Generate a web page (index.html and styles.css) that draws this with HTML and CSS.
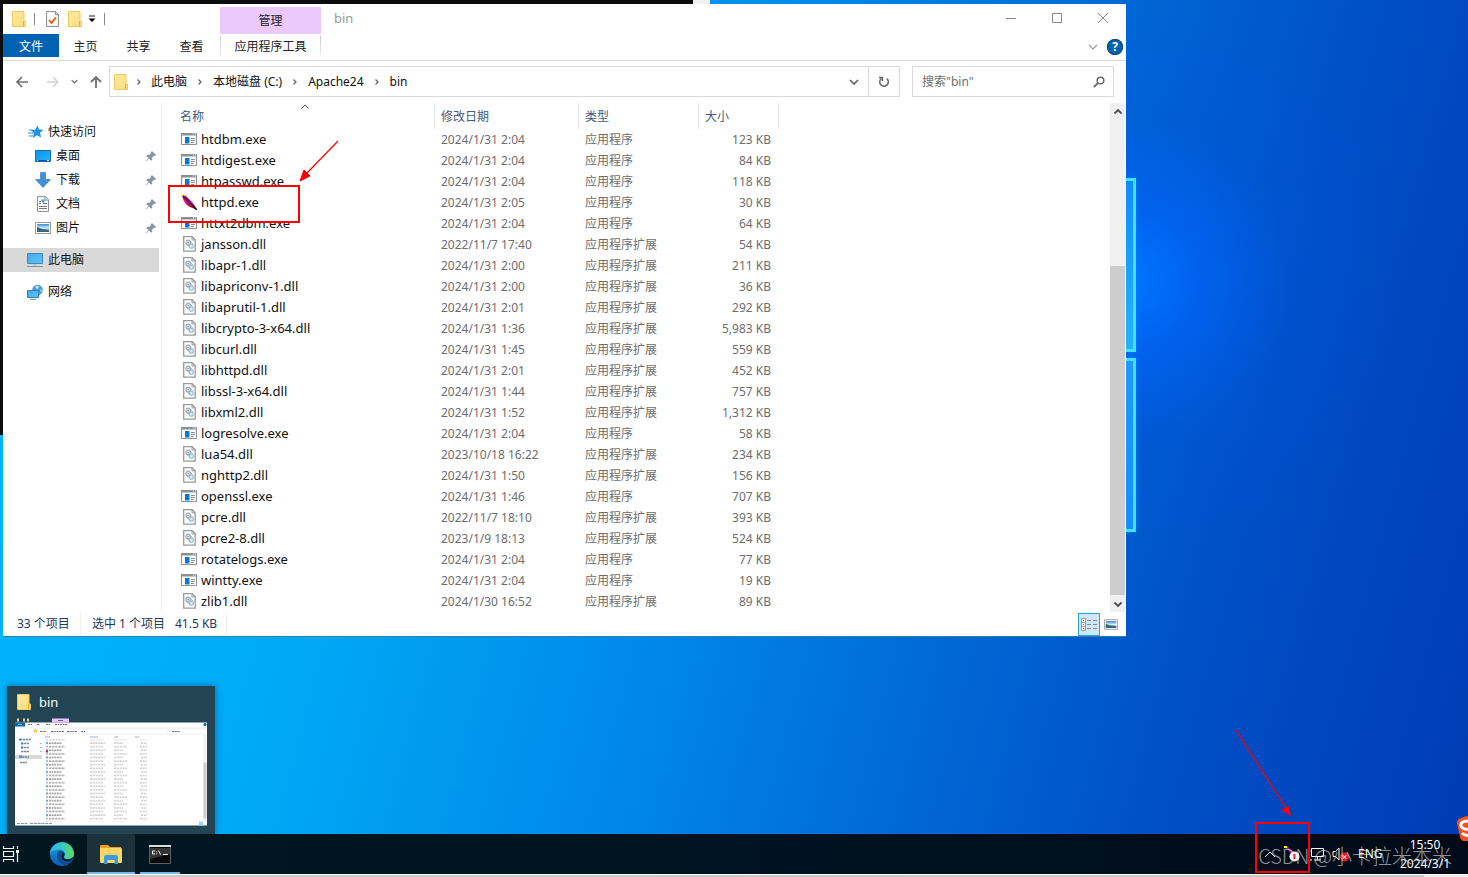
FILE: index.html
```html
<!DOCTYPE html>
<html lang="zh-CN">
<head>
<meta charset="utf-8">
<title>bin</title>
<link rel="stylesheet" href="styles.css">
</head>
<body>
<svg class="defs" aria-hidden="true">
  <defs>
    <linearGradient id="gFolder" x1="0" y1="0" x2="1" y2="1"><stop offset="0" stop-color="#ffe9a2"/><stop offset="1" stop-color="#ffdc7c"/></linearGradient>
    <linearGradient id="gBlue" x1="0" y1="0" x2="1" y2="1"><stop offset="0" stop-color="#0a93ee"/><stop offset="1" stop-color="#2ab4fb"/></linearGradient>
    <linearGradient id="gScreen" x1="0" y1="0" x2="1" y2="1"><stop offset="0" stop-color="#4aa9e8"/><stop offset="1" stop-color="#5cc4fb"/></linearGradient>
    <linearGradient id="gSky" x1="0" y1="0" x2="0" y2="1"><stop offset="0" stop-color="#3f86d6"/><stop offset=".5" stop-color="#d5ecf7"/><stop offset="1" stop-color="#2d6a86"/></linearGradient>
    <linearGradient id="gEdge" x1="0" y1="0" x2="1" y2="0"><stop offset="0" stop-color="#2fb5e8"/><stop offset=".5" stop-color="#35c9c2"/><stop offset="1" stop-color="#62db5a"/></linearGradient>
    <linearGradient id="gEdge2" x1="0" y1="0" x2="0" y2="1"><stop offset="0" stop-color="#1ba2e2"/><stop offset="1" stop-color="#0b5cb4"/></linearGradient>
    <pattern id="mini" width="192" height="7.2" patternUnits="userSpaceOnUse" patternTransform="translate(0 3)">
      <rect x="31" y="0" width="2" height="2" fill="#63a6dc"/>
      <path d="M34 1h13" stroke="#777" stroke-width="1.3" stroke-dasharray="2 .6"/>
      <path d="M75 1h15M99 1h9M126 1h6" stroke="#bbb" stroke-width="1.3" stroke-dasharray="2 .7"/>
      <rect x="31" y="3.6" width="2" height="2" fill="#b9bec4"/>
      <path d="M34 4.6h16" stroke="#888" stroke-width="1.3" stroke-dasharray="2.4 .7"/>
      <path d="M75 4.6h14M99 4.6h13M125 4.6h7" stroke="#bbb" stroke-width="1.3" stroke-dasharray="2 .8"/>
    </pattern>
  </defs>
  <symbol id="folder" viewBox="0 0 14 16"><path d="M.5.5h11.500v9.500h1.500v5.500H.5z" fill="url(#gFolder)" stroke="#edcb5e"/><path d="M11.500 10v5.500" stroke="#dfb63c"/></symbol>
  <symbol id="exe" viewBox="0 0 16 12"><path d="M.5.5h15v11H.5z" fill="#fff" stroke="#8b9094"/><path d="M0 0h16v2.500H0z" fill="#8b9094"/><path d="M12 1h1m1 0h1" stroke="#fff"/><path d="M4 4h4.500v6.500H4z" fill="#0a78d4"/><path d="M10 5.500h4M10 7.500h4M10 9.500h3" stroke="#8b9094"/></symbol>
  <symbol id="dll" viewBox="0 0 13 16"><path d="M.7.7h8.500l3 3v11.500H.7z" fill="#fff" stroke="#969a9e" stroke-width="1.300"/><path d="M9 .7v3.200h3.300" fill="none" stroke="#969a9e"/><circle cx="5.200" cy="6.500" r="2.300" fill="#e3e7eb" stroke="#a3abb4" stroke-width="1.200"/><circle cx="5.200" cy="6.500" r=".8" fill="#8f98a2"/><path d="M3 8l4.500 3.500M7 5l3 3.500" stroke="#a3abb4"/><circle cx="8.300" cy="10.300" r="2" fill="#d9eefa" stroke="#93bdd6" stroke-width="1.100"/></symbol>
  <symbol id="feather" viewBox="0 0 16 16"><path d="M1 1l4 1 3 3 3 3 3 4 1 3-4-1-4-2-3-3-2-4z" fill="#f0105c"/><path d="M2 2l3 3 4 4 5 5" stroke="#3a1b8f" stroke-width="2" fill="none"/><path d="M3 2l3 2 3 3M6 9l3 3 3 1" stroke="#d40000" fill="none"/><path d="M12 12l4 4" stroke="#000" stroke-width="1.500"/><path d="M0 0h2v2H0z" fill="#ff0"/></symbol>
  <symbol id="pin" viewBox="0 0 12 12"><path d="M7 1l4 4-1 1-1-.2-2 2 .2 2-1 1L4 8.500.7 11.500l-.4-.3L3.500 8 1.200 5.800l1-1 2 .2 2-2L6 2z" fill="#8796a3"/></symbol>
  <symbol id="sep" viewBox="0 0 8 8"><path d="M2.500 1.500L5 4 2.500 6.500" fill="none" stroke="#666" stroke-width="1.300"/></symbol>
  <symbol id="down" viewBox="0 0 10 10"><path d="M1 3l4 4 4-4" fill="none" stroke="currentColor" stroke-width="1.700"/></symbol>
  <symbol id="photo" viewBox="0 0 16 12"><path d="M.5.5h15v11H.5z" fill="#fff" stroke="#999"/><path d="M2 2h12v8H2z" fill="url(#gSky)"/><path d="M2 5l5 2 7 1v2H2z" fill="#30687a"/></symbol>
</svg>

<main class="desktop">
  <div class="pane pane-top"></div>
  <div class="pane pane-bottom"></div>
  <div class="console" aria-hidden="true"></div>
  <div class="console-side" aria-hidden="true"></div>

  <section class="window">
    <header class="titlebar">
      <div class="quick">
        <svg class="i-folder" aria-hidden="true"><use href="#folder"/></svg>
        <span class="bar"></span>
        <button class="plain" aria-label="属性"><svg class="i-check" viewBox="0 0 13 16"><path d="M.6.6h8.800l3 3v11.800H.6z" fill="#fff" stroke="#888"/><path d="M9.400.6v3h3" fill="none" stroke="#888"/><path d="M3 9l2.500 3L10 6.500" fill="none" stroke="#e8590c" stroke-width="1.800"/></svg></button>
        <button class="plain" aria-label="新建文件夹"><svg class="i-folder"><use href="#folder"/></svg></button>
        <button class="plain customize" aria-label="自定义快速访问工具栏"><svg class="i-caret" viewBox="0 0 8 8"><path d="M1 1h6" stroke="#222"/><path d="M.5 3.500h7L4 7z" fill="#000"/></svg></button>
        <span class="bar"></span>
      </div>
      <div class="context-title">管理</div>
      <h1 class="title">bin</h1>
      <div class="controls">
        <button aria-label="最小化"><svg viewBox="0 0 12 12"><path d="M1 6.500h10" stroke="#888"/></svg></button>
        <button aria-label="最大化"><svg viewBox="0 0 12 12"><path d="M1.500 1.500h9v9h-9z" fill="none" stroke="#888"/></svg></button>
        <button aria-label="关闭"><svg viewBox="0 0 12 12"><path d="M1 1l10 10M11 1L1 11" stroke="#888"/></svg></button>
      </div>
    </header>

    <nav class="ribbon">
      <button class="tab file">文件</button>
      <button class="tab">主页</button>
      <button class="tab">共享</button>
      <button class="tab">查看</button>
      <button class="tab tools">应用程序工具</button>
      <span class="ribbon-end">
        <button class="plain" aria-label="展开功能区"><svg class="i10" viewBox="0 0 10 10"><path d="M1 3l4 4 4-4" fill="none" stroke="#999" stroke-width="1.200"/></svg></button>
        <button class="help" aria-label="帮助">?</button>
      </span>
    </nav>

    <div class="address-row">
      <div class="history">
        <button class="plain" aria-label="后退"><svg viewBox="0 0 14 14"><path d="M13 7H2M7 2L2 7l5 5" fill="none" stroke="#6f6f6f" stroke-width="1.700"/></svg></button>
        <button class="plain" aria-label="前进"><svg viewBox="0 0 14 14"><path d="M1 7h11M7 2l5 5-5 5" fill="none" stroke="#d4d4d4" stroke-width="1.500"/></svg></button>
        <button class="plain recent" aria-label="最近"><svg class="i-small"><use href="#down"/></svg></button>
        <button class="plain" aria-label="上移"><svg viewBox="0 0 14 14"><path d="M7 13V2M2 7l5-5 5 5" fill="none" stroke="#6f6f6f" stroke-width="1.800"/></svg></button>
      </div>
      <div class="crumbs">
        <svg class="i-folder" aria-hidden="true"><use href="#folder"/></svg>
        <svg class="i-sep first" aria-hidden="true"><use href="#sep"/></svg>
        <a href="#">此电脑</a><svg class="i-sep" aria-hidden="true"><use href="#sep"/></svg>
        <a href="#">本地磁盘 (C:)</a><svg class="i-sep" aria-hidden="true"><use href="#sep"/></svg>
        <a href="#">Apache24</a><svg class="i-sep" aria-hidden="true"><use href="#sep"/></svg>
        <a href="#">bin</a>
        <button class="plain drop" aria-label="以前的位置"><svg class="i10"><use href="#down"/></svg></button>
        <button class="refresh" aria-label="刷新"><svg viewBox="0 0 12 12"><path d="M8.800 2.600A4.300 4.300 0 1 1 3.400 2.500M1 1.500h3.500V5" fill="none" stroke="#6a6a6a" stroke-width="1.500"/></svg></button>
      </div>
      <label class="search">
        <input type="text" placeholder="搜索&quot;bin&quot;" aria-label="搜索">
        <svg viewBox="0 0 12 12"><circle cx="7.500" cy="4.500" r="3.300" fill="none" stroke="#6a6a6a" stroke-width="1.500"/><path d="M5 7L.8 11" stroke="#6a6a6a" stroke-width="1.800"/></svg>
      </label>
    </div>

    <div class="content">
      <aside class="sidebar">
        <a href="#" class="side"><svg class="i16" viewBox="0 0 16 16"><path d="M9.500 1.500l1.500 4 4.500.3-3.500 3 1.200 4.700-4.200-2.300-4 2.800.8-4.700L3 6l4.300-.3z" fill="#2590e8"/><path d="M1 6h4M0 9h5M1 12h4" stroke="#2590e8"/></svg>快速访问</a>
        <a href="#" class="side sub"><svg class="i16" viewBox="0 0 16 16"><path d="M.5 2.500h15v11H.5z" fill="url(#gBlue)" stroke="#0871ba"/><path d="M1 12.500h14" stroke="#075899"/><path d="M2 12.500h1M12 12.500h2" stroke="#fff"/></svg>桌面<svg class="i-pin"><use href="#pin"/></svg></a>
        <a href="#" class="side sub"><svg class="i16" viewBox="0 0 16 16"><path d="M5.500.5h5v7h5L8 15.500.5 7.500h5z" fill="#3e8edb" stroke="#2b76bf" stroke-width=".6"/></svg>下载<svg class="i-pin"><use href="#pin"/></svg></a>
        <a href="#" class="side sub"><svg class="i16" viewBox="0 0 16 16"><path d="M2.500.6h8l3 3v11.800h-11z" fill="#fff" stroke="#8b8f93"/><path d="M10 .6v3.500h3.500" fill="none" stroke="#8b8f93"/><path d="M4 5.500h2M4 7.500h2M4 10.500h8M4 12.500h8M8 7.500h4" stroke="#777"/><path d="M6.500 3.500h3v3h-3z" fill="#3c9bd8"/></svg>文档<svg class="i-pin"><use href="#pin"/></svg></a>
        <a href="#" class="side sub"><svg class="i-photo"><use href="#photo"/></svg>图片<svg class="i-pin"><use href="#pin"/></svg></a>
        <a href="#" class="side root selected"><svg class="i16" viewBox="0 0 16 16"><path d="M.5 1.500h15v10H.5z" fill="url(#gScreen)" stroke="#3b87b8"/><path d="M0 14.500h16" stroke="#7b99ab"/><path d="M6 12h4v2H6z" fill="#b9cedb"/></svg>此电脑</a>
        <a href="#" class="side root"><svg class="i16" viewBox="0 0 16 16"><circle cx="10.500" cy="6" r="5.300" fill="#4c9bcd"/><path d="M8 2.500l3-1 1 2-2 2zM13 5l2 1-1 3z" fill="#bfe1ec"/><path d="M.5 6.500h11v7H.5z" fill="url(#gScreen)" stroke="#2d7fb5"/><path d="M3 15.500h6" stroke="#7b99ab"/></svg>网络</a>
      </aside>

      <div class="files">
        <svg class="sort" viewBox="0 0 8 5" aria-hidden="true"><path d="M.5 4.500L4 1l3.500 3.500" fill="none" stroke="#555"/></svg>
        <table>
          <colgroup><col class="c-name"><col class="c-date"><col class="c-type"><col class="c-size"></colgroup>
          <thead><tr><th>名称</th><th>修改日期</th><th>类型</th><th>大小</th></tr></thead>
          <tbody>
            <tr><td><span class="fn"><svg class="exe"><use href="#exe"/></svg>htdbm.exe</span></td><td>2024/1/31 2:04</td><td>应用程序</td><td>123 KB</td></tr>
            <tr><td><span class="fn"><svg class="exe"><use href="#exe"/></svg>htdigest.exe</span></td><td>2024/1/31 2:04</td><td>应用程序</td><td>84 KB</td></tr>
            <tr><td><span class="fn"><svg class="exe"><use href="#exe"/></svg>htpasswd.exe</span></td><td>2024/1/31 2:04</td><td>应用程序</td><td>118 KB</td></tr>
            <tr><td><span class="fn"><svg class="feather"><use href="#feather"/></svg>httpd.exe</span></td><td>2024/1/31 2:05</td><td>应用程序</td><td>30 KB</td></tr>
            <tr><td><span class="fn"><svg class="exe"><use href="#exe"/></svg>httxt2dbm.exe</span></td><td>2024/1/31 2:04</td><td>应用程序</td><td>64 KB</td></tr>
            <tr><td><span class="fn"><svg class="dll"><use href="#dll"/></svg>jansson.dll</span></td><td>2022/11/7 17:40</td><td>应用程序扩展</td><td>54 KB</td></tr>
            <tr><td><span class="fn"><svg class="dll"><use href="#dll"/></svg>libapr-1.dll</span></td><td>2024/1/31 2:00</td><td>应用程序扩展</td><td>211 KB</td></tr>
            <tr><td><span class="fn"><svg class="dll"><use href="#dll"/></svg>libapriconv-1.dll</span></td><td>2024/1/31 2:00</td><td>应用程序扩展</td><td>36 KB</td></tr>
            <tr><td><span class="fn"><svg class="dll"><use href="#dll"/></svg>libaprutil-1.dll</span></td><td>2024/1/31 2:01</td><td>应用程序扩展</td><td>292 KB</td></tr>
            <tr><td><span class="fn"><svg class="dll"><use href="#dll"/></svg>libcrypto-3-x64.dll</span></td><td>2024/1/31 1:36</td><td>应用程序扩展</td><td>5,983 KB</td></tr>
            <tr><td><span class="fn"><svg class="dll"><use href="#dll"/></svg>libcurl.dll</span></td><td>2024/1/31 1:45</td><td>应用程序扩展</td><td>559 KB</td></tr>
            <tr><td><span class="fn"><svg class="dll"><use href="#dll"/></svg>libhttpd.dll</span></td><td>2024/1/31 2:01</td><td>应用程序扩展</td><td>452 KB</td></tr>
            <tr><td><span class="fn"><svg class="dll"><use href="#dll"/></svg>libssl-3-x64.dll</span></td><td>2024/1/31 1:44</td><td>应用程序扩展</td><td>757 KB</td></tr>
            <tr><td><span class="fn"><svg class="dll"><use href="#dll"/></svg>libxml2.dll</span></td><td>2024/1/31 1:52</td><td>应用程序扩展</td><td>1,312 KB</td></tr>
            <tr><td><span class="fn"><svg class="exe"><use href="#exe"/></svg>logresolve.exe</span></td><td>2024/1/31 2:04</td><td>应用程序</td><td>58 KB</td></tr>
            <tr><td><span class="fn"><svg class="dll"><use href="#dll"/></svg>lua54.dll</span></td><td>2023/10/18 16:22</td><td>应用程序扩展</td><td>234 KB</td></tr>
            <tr><td><span class="fn"><svg class="dll"><use href="#dll"/></svg>nghttp2.dll</span></td><td>2024/1/31 1:50</td><td>应用程序扩展</td><td>156 KB</td></tr>
            <tr><td><span class="fn"><svg class="exe"><use href="#exe"/></svg>openssl.exe</span></td><td>2024/1/31 1:46</td><td>应用程序</td><td>707 KB</td></tr>
            <tr><td><span class="fn"><svg class="dll"><use href="#dll"/></svg>pcre.dll</span></td><td>2022/11/7 18:10</td><td>应用程序扩展</td><td>393 KB</td></tr>
            <tr><td><span class="fn"><svg class="dll"><use href="#dll"/></svg>pcre2-8.dll</span></td><td>2023/1/9 18:13</td><td>应用程序扩展</td><td>524 KB</td></tr>
            <tr><td><span class="fn"><svg class="exe"><use href="#exe"/></svg>rotatelogs.exe</span></td><td>2024/1/31 2:04</td><td>应用程序</td><td>77 KB</td></tr>
            <tr><td><span class="fn"><svg class="exe"><use href="#exe"/></svg>wintty.exe</span></td><td>2024/1/31 2:04</td><td>应用程序</td><td>19 KB</td></tr>
            <tr><td><span class="fn"><svg class="dll"><use href="#dll"/></svg>zlib1.dll</span></td><td>2024/1/30 16:52</td><td>应用程序扩展</td><td>89 KB</td></tr>
          </tbody>
        </table>
      </div>

      <div class="scrollbar" aria-hidden="true">
        <span class="arrow"><svg viewBox="0 0 10 10"><path d="M1.500 6.500L5 3l3.500 3.500" fill="none" stroke="#505050" stroke-width="1.900"/></svg></span>
        <span class="track"></span>
        <span class="thumb"></span>
        <span class="arrow"><svg viewBox="0 0 10 10"><path d="M1.500 3.500L5 7l3.500-3.500" fill="none" stroke="#505050" stroke-width="1.900"/></svg></span>
      </div>
    </div>

    <footer class="status">
      <span class="count">33 个项目</span>
      <span class="chosen">选中 1 个项目</span>
      <span class="bytes">41.5 KB</span>
      <span class="views">
        <button class="view on" aria-label="详细信息"><svg viewBox="0 0 16 14"><path d="M.5.500h4v4h-4zM.5 4.500h4v4h-4zM.5 8.500h4v4h-4z" fill="#fff" stroke="#999"/><path d="M6 2.500h4M6 6.500h4M6 10.500h4M12 2.500h4M12 6.500h4M12 10.500h4" stroke="#888"/><path d="M2 2h1v1H2z" fill="#555"/><path d="M2 6h1v1H2z" fill="#27f"/><path d="M2 10h1v1H2z" fill="#d22"/></svg></button>
        <button class="view" aria-label="大图标"><svg class="i-thumb"><use href="#photo"/></svg></button>
      </span>
    </footer>
  </section>

  <section class="preview">
    <div class="preview-title"><svg class="i-folder" aria-hidden="true"><use href="#folder"/></svg>bin</div>
    <svg class="preview-shot" viewBox="0 0 192 108" aria-hidden="true">
      <path d="M0 5h192v103H0z" fill="#fff"/>
      <path d="M2 1h2v3H2zM8 1h2v3H8zM12 1h2v3h-2z" fill="#e8d28a"/>
      <path d="M37 1h17v4H37z" fill="#e9c6fb"/>
      <path d="M43 3h5" stroke="#76587f"/>
      <path d="M0 5h10v4H0z" fill="#0063b1"/>
      <path d="M3 7h4" stroke="#8fc2ea"/>
      <path d="M13 7h4M22 7h3M31 7h4M40 7h12" stroke="#777" stroke-dasharray="2 .5"/>
      <path d="M0 10.500h192M18 11.500h135v5H18zM155 11.500h35v5h-35z" fill="none" stroke="#e2e2e2" stroke-width=".5"/>
      <path d="M19 12h3v3h-3z" fill="#f5c95a"/>
      <path d="M25 14h6M36 14h13M52 14h10M66 14h4M157 14h8" stroke="#777" stroke-dasharray="2.200 .5"/>
      <circle cx="190" cy="7" r="1.600" fill="#0063b1"/>
      <path d="M30 19.500h5M75 19.500h8M99 19.500h4M120 19.500h4" stroke="#9fb0c6"/>
      <path d="M0 37.500h27v4H0z" fill="#d9d9d9"/>
      <path d="M5 22h11M6 26h8M6 30h8M6 34h8M4 39.500h10M5 45h7" stroke="#7d8992" stroke-dasharray="2.500 .5" stroke-width="1.300"/>
      <path d="M4 21h2v2H4zM6 25h2v2H6zM6 29h2v2H6zM4 38h3v2H4z" fill="#2590e8"/>
      <path d="M25 26h1.500M25 30h1.500M25 34h1.500" stroke="#99a5af"/>
      <path d="M0 22h160v82H0z" fill="url(#mini)"/>
      <path d="M31 33h2v2h-2z" fill="#e0104c"/>
      <path d="M190 17v87" stroke="#f0f0f0" stroke-width="3"/>
      <path d="M190 45v56" stroke="#cdcdcd" stroke-width="3"/>
      <path d="M2 106h10M15 106h22" stroke="#8492a5" stroke-dasharray="3 .8"/>
      <path d="M184 104h4v4h-4z" fill="#9fd7f3"/>
    </svg>
  </section>

  <svg class="note-arrow one" viewBox="0 0 40 42" aria-hidden="true"><path d="M39 1L8 33" stroke="#f00" stroke-width="1.200"/><path d="M1 41l4-11 6 6z" fill="#f00" stroke="#f00"/></svg>
  <div class="note-box one"></div>
  <svg class="note-arrow two" viewBox="0 0 58 88" aria-hidden="true"><path d="M2 1l50 78" stroke="#f00" stroke-width="1.200"/><path d="M57 87l-10-6 8-4z" fill="#f00"/></svg>
</main>

<footer class="taskbar">
  <button class="task-view" aria-label="任务视图"><svg viewBox="0 0 16 16"><path d="M.5 5.500h10v5H.5zM.5 0v2.500h10V0M.5 16v-2.500h10V16M14.500 0v3M14.500 7v9" fill="none" stroke="#fff" stroke-width="1.200"/><path d="M13 4h3v3h-3z" fill="#fff"/></svg></button>
  <button class="task" aria-label="Microsoft Edge"><svg class="i24" viewBox="0 0 24 24"><circle cx="12" cy="12" r="12" fill="url(#gEdge2)"/><path d="M0 11C1-1 21-5 24 11c.5 5-4 6.500-7.500 6-2.500-.4-3-1.500-2-3 2-4-2-7-6-6.500C4 8 1 9 0 11z" fill="url(#gEdge)"/><path d="M9 9c-5 5-1 13 6 14 3 0 6-2 7.500-4.500-4 2-9.500 1-11-2.500-1-2.500 0-5 1.500-6-1-1.300-2.500-1.500-4-1z" fill="#0c4a9c"/><path d="M13 10c2 1 2 3 .8 4.500-.8 2 1.200 3 4.200 2.700 2.500-.2 4.500-1.200 5.500-3-.8 3-2.500 4.500-4.500 5.100-4 .7-7.500-1.300-7.500-5 0-2 .7-3.500 1.500-4.300z" fill="#001a24"/></svg></button>
  <button class="task active" aria-label="文件资源管理器"><svg class="i-explorer" viewBox="0 0 22 19"><path d="M0 1q0-1 1-1h7l2 2h11v3H0z" fill="#e8a317"/><path d="M0 3h21q1 0 1 1v13q0 1-1 1H1q-1 0-1-1z" fill="#fdd663"/><path d="M4 19v-7q0-2 2-2h10q2 0 2 2v7h-3.500v-4h-7v4z" fill="#3b9ae0"/></svg></button>
  <button class="task open" aria-label="命令提示符"><svg class="i-cmd" viewBox="0 0 22 19"><path d="M.5.500h21v18H.5z" fill="#0a0a0a" stroke="#5a6165"/><path d="M0 0h22v2H0z" fill="#d9dde0"/><path d="M1 3h20v6L1 14z" fill="#343434"/><path d="M6 6H3.500v3H6M7.500 6.500v.800M7.500 8.500v.800M9.500 5.500l2 4M14 9.500h5" fill="none" stroke="#fff"/></svg></button>
  <div class="tray">
    <svg class="i-chevron" viewBox="0 0 12 8" aria-hidden="true"><path d="M1 7l5-5 5 5" fill="none" stroke="#fff"/></svg>
    <svg class="i16" viewBox="0 0 16 16" aria-hidden="true"><path d="M2 1l11 10" stroke="#c2188f" stroke-width="2.500"/><path d="M2 2l9 9" stroke="#402ba8"/><path d="M0 0h3v2H0z" fill="#ff0"/><circle cx="10.500" cy="10.500" r="5" fill="#fff"/><path d="M9 8h2.500v5H9z" fill="#e21b3c"/></svg>
    <svg class="i-net" viewBox="0 0 16 14" aria-hidden="true"><path d="M3.500 1.500h12v8h-12zM9.500 10v3M6 13h7M.5 1v3h2M1.500 4v9H4" fill="none" stroke="#fff"/></svg>
    <svg class="i-vol" viewBox="0 0 18 16" aria-hidden="true"><path d="M1 5.500h2.500L7 2v12l-3.500-3.500H1z" fill="none" stroke="#fff"/><circle cx="12.500" cy="11" r="4.500" fill="#d6202c"/><path d="M10.700 9.200l3.600 3.600M14.300 9.200l-3.600 3.600" stroke="#fff"/></svg>
    <span class="lang">ENG</span>
    <time class="clock"><span>15:50</span><span>2024/3/1</span></time>
  </div>
  <div class="note-box two"></div>
  <svg class="ime" viewBox="0 0 11 26" aria-hidden="true"><path d="M4 2Q8 0 11 0v25H7q-3 0-4-4L0 7q0-4 4-5z" fill="#f4511e"/><path d="M11 5Q3 5 4 10q1 3 7 3.500M5 17q3 3 6 2.500" fill="none" stroke="#fff" stroke-width="3"/></svg>
  <div class="watermark">CSDN @小卡拉米本米</div>
</footer>
<div class="page-scroll" aria-hidden="true"></div>
</body>
</html>
```
FILE: styles.css
```css
* { box-sizing: border-box; }
body {
  margin: 0;
  min-height: 100vh;
  display: flex;
  flex-direction: column;
  overflow: hidden;
  background: #fff;
  font: 12px/16px "Noto Sans", "Noto Sans CJK SC", sans-serif;
  color: #222;
}
button { border: 0; padding: 0; background: none; font: inherit; color: inherit; }
a { color: inherit; text-decoration: none; }
svg { display: block; flex: none; }
.defs { position: absolute; width: 0; height: 0; }
.plain { display: flex; align-items: center; justify-content: center; color: #666; }
.i-folder { width: 14px; height: 16px; }
.i16 { width: 16px; height: 16px; }
.i24 { width: 24px; height: 24px; }
.i10 { width: 10px; height: 10px; }

/* desktop */
.desktop {
  position: relative;
  flex: 1;
  overflow: hidden;
  background:
    radial-gradient(circle at 1130px 280px, rgba(0, 116, 255, 1) 0, rgba(0, 100, 250, .7) 70px, rgba(0, 85, 225, .25) 160px, rgba(0, 80, 215, 0) 270px),
    linear-gradient(105deg, #00b8ff 0%, #00a9f6 28%, #0089ea 48%, #0069d6 66%, #004ec6 82%, #003cb4 100%);
}
.pane {
  position: absolute;
  left: 1000px;
  width: 136px;
  height: 174px;
  border: 3px solid #3fe3ff;
  background: linear-gradient(#0f8cff, #22b4ff);
  box-shadow: 0 0 4px #0a84ff;
}
.pane-top { top: 178px; }
.pane-bottom { top: 358px; background: linear-gradient(#2098ff, #1390ff); }
.console { position: absolute; left: 0; top: 0; width: 710px; height: 4px; background: linear-gradient(90deg, #0c0c0c 693px, #f0f0f0 693px); }
.console-side { position: absolute; left: 0; top: 0; width: 3px; height: 435px; background: #0c0c0c; }

/* explorer window */
.window {
  position: absolute;
  left: 3px;
  top: 4px;
  width: 76.5%;
  display: flex;
  flex-direction: column;
  background: #fff;
  box-shadow: 0 1px 0 #2b7fa8;
}
.titlebar { display: flex; height: 30px; }
.quick { width: 217px; display: flex; align-items: center; gap: 9px; padding-left: 9px; }
.quick .bar { width: 1px; height: 12px; margin: 0 2px 0 -1px; background: #888; }
.i-check { width: 13px; height: 16px; }
.i-caret { width: 8px; height: 8px; }
.customize { margin-left: -3px; }
.context-title { width: 101px; margin-top: 3px; padding-top: 6px; text-align: center; background: #ecc9fd; }
.title { flex: 1; margin: 0; padding: 6px 13px; font-size: 13px; line-height: 16px; font-weight: 400; color: #999; }
.controls { display: flex; }
.controls button { width: 46px; display: flex; justify-content: center; padding-top: 8px; }
.controls svg { width: 12px; height: 12px; }

.ribbon { display: flex; height: 27px; padding-bottom: 3px; border-bottom: 1px solid #dadbdc; }
.tab { width: 53px; padding-top: 2px; }
.tab.file { width: 56px; background: #0063b1; color: #fff; }
.tab.tools {
  width: 101px;
  margin-left: 2px;
  background: linear-gradient(#ccc, #eee) left / 1px 20px no-repeat, linear-gradient(#ccc, #eee) right / 1px 20px no-repeat;
}
.ribbon-end { margin-left: auto; display: flex; align-items: center; gap: 9px; padding: 2px 3px 0 0; }
.help { width: 16px; height: 16px; border-radius: 50%; background: #0063b1; box-shadow: inset 0 0 0 1px #16456f; color: #fff; font-weight: 700; line-height: 16px; }

.address-row { display: flex; align-items: center; padding: 5px 12px 5px 0; }
.history { width: 106px; display: flex; align-items: center; justify-content: space-between; padding: 0 6px 0 12px; }
.history svg { width: 14px; height: 14px; }
.history .i-small { width: 7px; height: 7px; }
.history .plain:nth-child(2) { margin-left: 6px; }
.crumbs { flex: 1; height: 31px; display: flex; align-items: center; padding-left: 4px; border: 1px solid #d9d9d9; color: #111; white-space: nowrap; }
.i-sep { width: 8px; height: 8px; margin: 0 9px; }
.i-sep.first { margin: 0 8px 0 7px; }
.drop { width: 28px; height: 29px; margin-left: auto; }
.refresh { width: 31px; height: 29px; display: flex; align-items: center; justify-content: center; border-left: 1px solid #d9d9d9; }
.refresh svg { width: 12px; height: 12px; }
.search { width: 202px; height: 31px; margin-left: 12px; display: flex; align-items: center; padding: 0 8px; border: 1px solid #d9d9d9; }
.search input { flex: 1; min-width: 0; border: 0; padding: 0 1px; font: inherit; outline: 0; background: none; }
.search input::placeholder { color: #6d6d6d; opacity: 1; }
.search svg { width: 12px; height: 12px; }

.content { display: flex; padding-top: 1px; }
.sidebar { width: 159px; display: flex; flex-direction: column; padding-top: 17px; border-right: 1px solid #f2f2f2; }
.side { height: 24px; margin-right: 2px; display: flex; align-items: center; gap: 4px; padding-left: 25px; color: #111; }
.side.sub { gap: 5px; padding-left: 32px; }
.side.root { margin-top: 8px; gap: 5px; padding-left: 24px; }
.side.selected { background: #d9d9d9; }
.i-pin { width: 12px; height: 12px; margin: 0 2px 0 auto; }
.i-photo { width: 16px; height: 12px; }

.files { flex: 1; position: relative; }
.sort { position: absolute; left: 139px; top: 1px; width: 8px; height: 5px; }
table { border-collapse: separate; border-spacing: 0; table-layout: fixed; width: 617px; color: #6d6d6d; }
.c-name { width: 273px; }
.c-date { width: 144px; }
.c-type { width: 120px; }
.c-size { width: 80px; }
th { height: 26px; padding: 2px 6px 0; border-right: 1px solid #e5e5e5; text-align: left; font-weight: 400; color: #44597c; }
th:first-child { padding-left: 18px; }
td { height: 21px; padding: 0 6px; line-height: 16px; }
td:first-child { padding: 0 0 2px 19px; color: #111; }
td:last-child { padding-right: 8px; text-align: right; }
.fn { display: flex; align-items: center; gap: 4px; font-size: 13px; }
.exe { width: 16px; height: 12px; }
.dll { width: 13px; height: 16px; margin: 0 1px 0 2px; }
.feather { width: 16px; height: 16px; }

.scrollbar { width: 15px; margin-right: 1px; display: flex; flex-direction: column; background: #f0f0f0; }
.arrow { height: 17px; display: flex; align-items: center; justify-content: center; }
.arrow svg { width: 10px; height: 10px; }
.track { flex: 146; }
.thumb { flex: 330; background: #cdcdcd; }

.status { display: flex; align-items: stretch; height: 24px; line-height: 24px; color: #1e395b; }
.count { width: 78px; padding-left: 14px; border-right: 1px solid #f0f0f0; }
.chosen { width: 94px; padding-left: 11px; }
.bytes { width: 52px; border-right: 1px solid #f0f0f0; white-space: nowrap; }
.views { margin-left: auto; display: flex; padding: 1px 4px 0 0; }
.view { width: 22px; display: flex; align-items: center; justify-content: center; }
.view.on { border: 1px solid #26a0da; background: #cce8f6; }
.view svg { width: 16px; height: 14px; }
.view .i-thumb { width: 14px; height: 11px; }

/* window preview */
.preview {
  position: absolute;
  left: 7px;
  bottom: 0;
  width: 208px;
  padding: 8px;
  background: #224453;
  box-shadow: 0 0 6px rgba(0, 40, 70, .5);
}
.preview-title { display: flex; align-items: center; gap: 8px; height: 16px; margin: 0 0 7px 2px; font-size: 13px; color: #fff; }
.preview-shot { width: 192px; height: 109px; }

/* annotations */
.note-box { position: absolute; border: 2px solid #f00; }
.note-box.one { left: 168px; top: 185px; width: 132px; height: 38px; }
.note-box.two { right: 158px; top: -12px; width: 55px; height: 51px; }
.note-arrow { position: absolute; }
.note-arrow.one { left: 299px; top: 140px; width: 40px; height: 42px; }
.note-arrow.two { right: 176px; bottom: 17px; width: 58px; height: 88px; }
.ime { position: absolute; right: 0; top: -18px; width: 11px; height: 26px; }

/* taskbar */
.taskbar { position: relative; display: flex; height: 40px; background: linear-gradient(90deg, #00171f, #001322 50%, #000a18); color: #fff; }
.task-view { width: 38px; display: flex; align-items: center; padding-left: 3px; }
.task-view svg { width: 16px; height: 16px; }
.task { width: 48px; display: flex; align-items: center; justify-content: center; }
.task:nth-child(2) { margin-right: 1px; }
.task.active { background: #1b323b; border-bottom: 2px solid #76b9ed; padding-top: 2px; }
.task.open { margin-left: 1px; background: linear-gradient(#76b9ed, #76b9ed) center bottom / 40px 2px no-repeat; }
.i-explorer, .i-cmd { width: 22px; height: 19px; }
.tray { margin-left: auto; display: flex; align-items: center; gap: 8px; padding-right: 15px; }
.i-chevron { width: 12px; height: 8px; }
.i-net { width: 16px; height: 14px; }
.i-vol { width: 18px; height: 16px; }
.lang { width: 31px; }
.clock { width: 56px; display: flex; flex-direction: column; align-items: center; line-height: 19px; white-space: nowrap; }
.watermark {
  position: absolute;
  right: 16px;
  top: 8px;
  font: 300 20px/28px "Noto Sans CJK SC", sans-serif;
  color: rgba(225, 225, 225, .65);
  white-space: nowrap;
}
.page-scroll { height: 3px; border-top: 1px solid #fff; background: linear-gradient(90deg, #c9c9c9 97%, #eee 97%); }
```
